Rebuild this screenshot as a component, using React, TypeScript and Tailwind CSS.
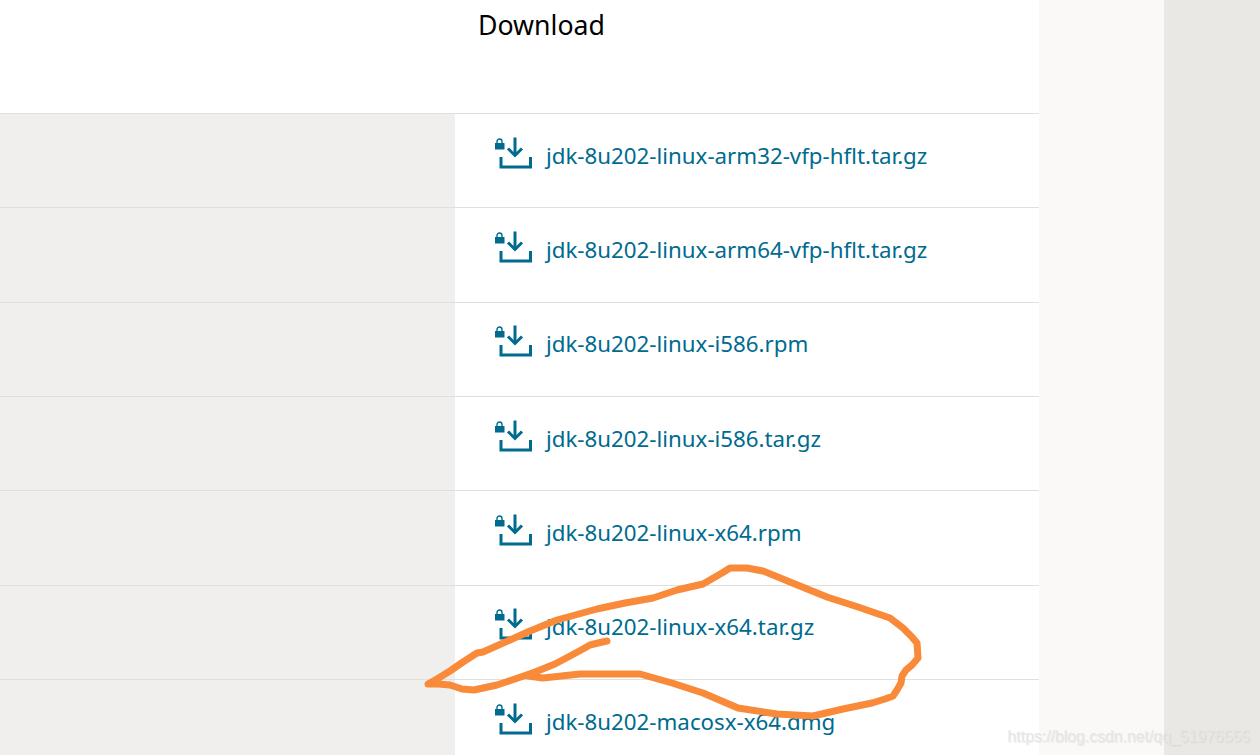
const ROWS = [
  "jdk-8u202-linux-arm32-vfp-hflt.tar.gz",
  "jdk-8u202-linux-arm64-vfp-hflt.tar.gz",
  "jdk-8u202-linux-i586.rpm",
  "jdk-8u202-linux-i586.tar.gz",
  "jdk-8u202-linux-x64.rpm",
  "jdk-8u202-linux-x64.tar.gz",
  "jdk-8u202-macosx-x64.dmg",
];

const SCRIBBLE =
  "M607 641 L598 643 L590 645 L583 649 L570 656 L555 664 L535 672 L515 679 L497 685 L474 690 L462 689 L450 685 L438 684 L428 684 L437 679 L450 671 L463 662 L477 653 L483 652 L510 640 L530 631 L557 620 L597 609 L625 603 L653 598 L677 590 L703 584 L722 573 L730 568 L747 568 L763 571 L790 582 L827 597 L858 607 L890 618 L903 628 L912 637 L917 643 L918 658 L912 665 L906 670 L902 676 L901 683 L897 690 L893 696 L885 699 L872 703 L843 709 L813 716 L777 714 L738 708 L703 693 L672 683 L640 674 L610 674 L580 674 L543 678 L528 676";

function DownloadIcon() {
  return (
    <svg width="40" height="36" viewBox="0 0 40 36" fill="none" className="shrink-0">
      <path d="M2 7.5 V4.5 A2.5 2.5 0 0 1 7 4.5 V7.5" stroke="#006b8f" strokeWidth="1.4" />
      <rect x="-0.5" y="6" width="10" height="6.5" rx="0.5" fill="#006b8f" />
      <path d="M20 0.5 V18" stroke="#006b8f" strokeWidth="3" />
      <path d="M13 11.5 L20 18.5 L27 11.5" stroke="#006b8f" strokeWidth="3" />
      <path d="M6 20 V30 H35.5 V20" stroke="#006b8f" strokeWidth="3" />
    </svg>
  );
}

export default function App() {
  return (
    <div className="relative flex h-[755px] w-[1260px] overflow-hidden bg-white font-['Noto_Sans','Open_Sans',sans-serif]">
      <div className="w-[1039px] shrink-0">
        <div className="flex h-[114px] border-b border-[#e0dfdd] pl-[478px] pt-[6px]">
          <span className="text-[26.7px] leading-[38px] text-black">Download</span>
        </div>
        {ROWS.map((name) => (
          <div key={name} className="flex h-[94.33px] border-b border-[#e0dfdd]">
            <div className="w-[455px] shrink-0 bg-[#f1efed]" />
            <div className="flex flex-1 items-center gap-[11px] pl-[40px] pb-[12px]">
              <DownloadIcon />
              <a className="pt-[2px] text-[22.3px] leading-[32px] text-[#006b8f]">{name}</a>
            </div>
          </div>
        ))}
      </div>
      <div className="w-[125px] shrink-0 bg-[#faf9f7]" />
      <div className="flex-1 bg-[#e9e8e4]" />

      <svg width="1260" height="755" viewBox="0 0 1260 755" fill="none" className="pointer-events-none absolute left-0 top-0">
        <path d={SCRIBBLE} stroke="#f98a3a" strokeWidth="7" strokeLinecap="round" strokeLinejoin="round" />
      </svg>
      <span className="absolute bottom-[6px] right-[10px] font-['Liberation_Sans',sans-serif] text-[15.8px] leading-[24px] text-[#e6e6e6] [text-shadow:1px_1px_1px_rgba(0,0,0,0.08)]">
        https://blog.csdn.net/qq_51976555
      </span>
    </div>
  );
}
